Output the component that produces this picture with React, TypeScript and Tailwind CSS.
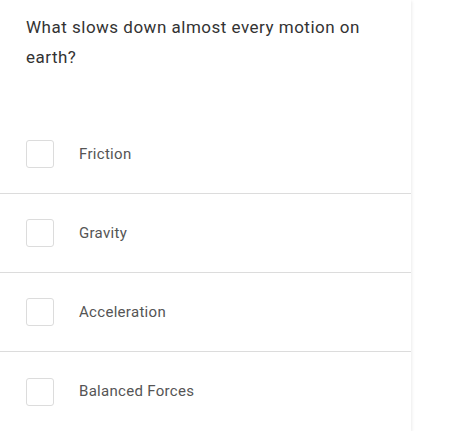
import React from 'react';

const options = ['Friction', 'Gravity', 'Acceleration', 'Balanced Forces'];

export default function App() {
  return (
    <div className="min-h-screen bg-white" style={{ fontFamily: 'Roboto, "Noto Sans", sans-serif' }}>
      <div className="w-[411px] bg-white shadow-[1px_1px_3px_rgba(0,0,0,0.08)]">
        <div className="px-[26px] pt-[12px] pb-[43px]">
          <h2 className="text-[17px] leading-[30px] text-[#333] font-normal tracking-[0.5px]">
            What slows down almost every motion on earth?
          </h2>
        </div>
        <div>
          {options.map((opt, i) => (
            <label
              key={opt}
              className={`flex items-center h-[79px] px-[26px] ${i < options.length - 1 ? 'border-b border-[#dcdcdc]' : ''}`}
            >
              <span className="w-[28px] h-[28px] rounded-[3px] border border-[#dcdcdc] bg-white shrink-0" />
              <span className="ml-[25px] text-[15px] text-[#555] tracking-[0.3px]">{opt}</span>
            </label>
          ))}
        </div>
      </div>
    </div>
  );
}
